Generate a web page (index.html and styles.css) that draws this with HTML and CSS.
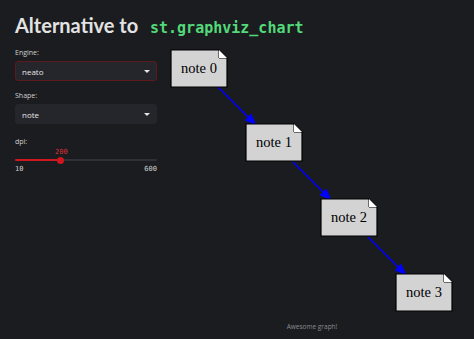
FILE: index.html
```html
<!DOCTYPE html>
<html lang="en">
<head>
    <meta charset="UTF-8">
    <title>Alternative to st.graphviz_chart</title>
    <link rel="stylesheet" href="styles.css">
</head>
<body>
    <div class="page">
        <h1 class="title">Alternative to <code>st.graphviz_chart</code></h1>
        <div class="columns">
            <div class="controls">
                <label class="label">Engine:</label>
                <div class="select focused">
                    <span>neato</span>
                    <span class="caret"></span>
                </div>
                <label class="label">Shape:</label>
                <div class="select">
                    <span>note</span>
                    <span class="caret"></span>
                </div>
                <label class="label slider-label">dpi:</label>
                <div class="slider">
                    <div class="slider-value">200</div>
                    <div class="track">
                        <div class="fill" style="width: 32.2%"></div>
                        <div class="thumb" style="left: 32.2%"></div>
                    </div>
                    <div class="range">
                        <span>10</span>
                        <span>600</span>
                    </div>
                </div>
            </div>
            <figure class="chart">
                <svg width="294" height="268" viewBox="165 45 294 268">
                    <defs>
                        <g id="note">
                            <polygon points="0,0 48,0 56,8 56,37 0,37" fill="#d3d3d3" stroke="#000" stroke-width="1.2"/>
                            <polyline points="48,0 48,8 56,8" fill="none" stroke="#000" stroke-width="1"/>
                            <polygon points="48,0 56,8 48,8" fill="#fff"/>
                        </g>
                    </defs>
                    <g stroke="#0000ff" stroke-width="1.6" fill="#0000ff">
                        <line x1="218" y1="86" x2="251" y2="119"/>
                        <polygon points="255,123 246,119 251,114"/>
                        <line x1="293" y1="161" x2="326" y2="194"/>
                        <polygon points="330,198 321,194 326,189"/>
                        <line x1="368" y1="236" x2="401" y2="269"/>
                        <polygon points="405,273 396,269 401,264"/>
                    </g>
                    <use href="#note" x="171" y="49"/>
                    <use href="#note" x="246" y="123"/>
                    <use href="#note" x="321" y="198"/>
                    <use href="#note" x="396" y="273"/>
                    <g font-family="Liberation Serif, serif" font-size="14.5" fill="#000" text-anchor="middle">
                        <text x="199" y="72">note 0</text>
                        <text x="274" y="146">note 1</text>
                        <text x="349" y="221">note 2</text>
                        <text x="424" y="296">note 3</text>
                    </g>
                </svg>
                <figcaption class="caption">Awesome graph!</figcaption>
            </figure>
        </div>
    </div>
</body>
</html>
```

FILE: styles.css
```css
body {
    margin: 0;
    background-color: #1b1c1f;
    color: #e6e6e6;
    font-family: "Open Sans", "Noto Sans", sans-serif;
}

.page {
    padding: 12px 15px 0 15px;
}

.title {
    margin: 0;
    font-family: Lato, "Open Sans", sans-serif;
    font-size: 20px;
    font-weight: 700;
    line-height: 26px;
    color: #e3e3e3;
}

.title code {
    margin-left: 7px;
    font-family: "DejaVu Sans Mono", monospace;
    font-size: 15px;
    font-weight: 700;
    color: #52d97a;
}

.columns {
    display: flex;
    gap: 8px;
    margin-top: 7px;
}

.controls {
    flex: 0 0 142px;
    display: flex;
    flex-direction: column;
}

.label {
    font-size: 7px;
    color: #d0d0d0;
    line-height: 10px;
    margin-bottom: 3px;
}

.slider-label {
    margin-top: 3px;
    margin-bottom: 1px;
}

.select {
    height: 20px;
    box-sizing: border-box;
    background-color: #25262b;
    border: 1px solid #25262b;
    border-radius: 3px;
    display: flex;
    align-items: center;
    justify-content: space-between;
    padding: 0 6px;
    font-size: 8px;
    color: #e6e6e6;
    margin-bottom: 10px;
}

.select.focused {
    border-color: #5c1a1e;
}

.caret {
    width: 0;
    height: 0;
    border-left: 3px solid transparent;
    border-right: 3px solid transparent;
    border-top: 3px solid #e6e6e6;
}

.slider {
    display: flex;
    flex-direction: column;
}

.slider-value {
    margin-left: 40px;
    font-family: "DejaVu Sans Mono", monospace;
    font-size: 7px;
    color: #d8313a;
    line-height: 9px;
}

.track {
    position: relative;
    height: 2px;
    margin: 2px 0 4px 0;
    background-color: #2f3038;
    border-radius: 1px;
}

.fill {
    height: 100%;
    background-color: #d0161e;
    border-radius: 1px;
}

.thumb {
    position: absolute;
    top: -2.5px;
    width: 7px;
    height: 7px;
    margin-left: -3.5px;
    border-radius: 50%;
    background-color: #d0161e;
}

.range {
    display: flex;
    justify-content: space-between;
    font-family: "DejaVu Sans Mono", monospace;
    font-size: 7px;
    color: #cfcfcf;
}

.chart {
    flex: 1;
    margin: -2px 0 0 0;
    display: flex;
    flex-direction: column;
    align-items: center;
}

.chart svg {
    display: block;
}

.caption {
    margin-top: 8px;
    font-size: 6.5px;
    color: #8a8b90;
}
```
